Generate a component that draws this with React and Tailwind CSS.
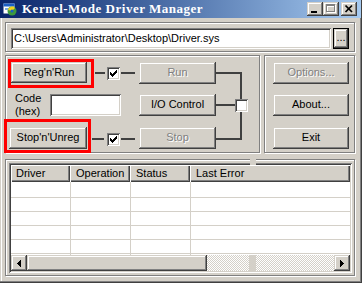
import React from 'react';

// classic win2k bevels
const raised =
  'bg-[#d4d0c8] shadow-[inset_-1px_-1px_0_#404040,inset_1px_1px_0_#d4d0c8,inset_-2px_-2px_0_#808080,inset_2px_2px_0_#fff]';
const sunken =
  'bg-white shadow-[inset_1px_1px_0_#808080,inset_-1px_-1px_0_#fff,inset_2px_2px_0_#404040,inset_-2px_-2px_0_#d4d0c8]';
const etched = 'border border-[#808080] shadow-[inset_1px_1px_0_#fff,1px_1px_0_#fff]';
const headerCell =
  'bg-[#d4d0c8] shadow-[inset_1px_1px_0_#fff,inset_-1px_-1px_0_#404040,inset_-2px_-2px_0_#808080]';
const dither = 'bg-[repeating-conic-gradient(#fff_0_25%,#d4d0c8_0_50%)] bg-size-[2px_2px]';

const Button = ({ className = '', disabled, children }) => (
  <div
    className={`${raised} flex shrink-0 items-center justify-center pb-[1px] ${
      disabled ? 'text-[#808080] [text-shadow:1px_1px_0_#fff]' : 'text-black'
    } ${className}`}
  >
    {children}
  </div>
);

const Check = ({ checked, className = '' }) => (
  <div className={`${sunken} flex h-[13px] w-[13px] shrink-0 items-center justify-center ${className}`}>
    {checked && (
      <svg width="7" height="7" viewBox="0 0 7 7" shapeRendering="crispEdges">
        <g fill="#000">
          <rect x="6" y="0" width="1" height="1" />
          <rect x="5" y="1" width="2" height="1" />
          <rect x="0" y="2" width="1" height="1" />
          <rect x="4" y="2" width="3" height="1" />
          <rect x="0" y="3" width="2" height="1" />
          <rect x="3" y="3" width="3" height="1" />
          <rect x="0" y="4" width="5" height="1" />
          <rect x="1" y="5" width="3" height="1" />
          <rect x="2" y="6" width="1" height="1" />
        </g>
      </svg>
    )}
  </div>
);

const Line = ({ className = '' }) => <div className={`h-[2px] shrink-0 bg-[#404040] ${className}`} />;

const rowHeights = ['h-[16px]', 'h-[14px]', 'h-[14px]', 'h-[14px]', 'h-[14px]', 'h-[1px]'];

export default function App() {
  return (
    <div className="relative flex h-[283px] w-[362px] flex-col overflow-hidden border-r border-b border-[#404040] bg-[#d4d0c8] font-['Liberation_Sans',Arial,sans-serif] text-[11px] leading-[13px] text-black shadow-[inset_-1px_-1px_0_#808080,inset_1px_0_0_#d4d0c8,inset_2px_0_0_#fff]">
      {/* Title bar */}
      <div className="flex h-[18px] shrink-0 items-center bg-linear-to-r from-[#0a246a] to-[#a6caf0]">
        <svg className="ml-[2px] shrink-0" width="16" height="16" viewBox="0 0 16 16">
          <rect x="1" y="2" width="12" height="11" fill="#fff" stroke="#0a246a" />
          <rect x="1.5" y="2.5" width="11" height="3" fill="#1c5fc4" />
          <circle cx="10" cy="10" r="4.5" fill="#3c9a3c" />
          <path d="M6 9 A4 4 0 0 1 13 7 L10 10 Z" fill="#f2d21b" />
          <circle cx="10" cy="10" r="1.5" fill="#1c5fc4" />
          <rect x="3" y="7" width="3" height="2" fill="#7aa7e0" />
        </svg>
        <span className="ml-[4px] mt-[-2px] font-['Liberation_Serif',serif] text-[13px] font-bold tracking-[0.5px] text-white">
          Kernel-Mode Driver Manager
        </span>
        <div className="flex-1" />
        <div className={`${raised} h-[14px] w-[16px]`}>
          <svg width="16" height="14" shapeRendering="crispEdges">
            <rect x="4" y="9" width="6" height="2" fill="#000" />
          </svg>
        </div>
        <div className={`${raised} h-[14px] w-[16px]`}>
          <svg width="16" height="14" shapeRendering="crispEdges">
            <g fill="none" stroke="#fff">
              <rect x="4.5" y="3.5" width="8" height="7" />
              <line x1="4" y1="4.5" x2="13" y2="4.5" />
            </g>
            <g fill="none" stroke="#808080">
              <rect x="3.5" y="2.5" width="8" height="7" />
              <line x1="3" y1="3.5" x2="12" y2="3.5" />
            </g>
          </svg>
        </div>
        <div className={`${raised} ml-[2px] mr-[4px] h-[14px] w-[16px]`}>
          <svg width="16" height="14">
            <g stroke="#000" strokeWidth="1.7">
              <line x1="4.5" y1="3.5" x2="11" y2="10" />
              <line x1="11" y1="3.5" x2="4.5" y2="10" />
            </g>
          </svg>
        </div>
      </div>

      <div className="flex flex-col pl-[5px] pt-[4px]">
        {/* Path */}
        <div className={`${etched} flex h-[30px] w-[350px] items-start`}>
          <div className={`${sunken} ml-[5px] mt-[5px] flex h-[21px] w-[320px] items-center pl-[3px]`}>
            C:\Users\Administrator\Desktop\Driver.sys
          </div>
          <div className="ml-[2px] mt-[5px] h-[21px] w-[16px] border border-black">
            <div className={`${raised} flex h-full w-full items-center justify-center pb-[2px]`}>...</div>
          </div>
        </div>

        <div className="mt-[3px] flex">
          {/* Controls */}
          <div className={`${etched} flex h-[98px] w-[255px]`}>
            <div className="flex w-[210px] shrink-0 flex-col">
              <div className="mt-[3px] flex h-[29px] items-start">
                <div className="ml-[2px] h-[29px] w-[86px] shrink-0 border-[3px] border-[#ff0000]">
                  <Button className="h-[21px] w-[76px]">Reg'n'Run</Button>
                </div>
                <Line className="ml-[1px] mt-[13px] w-[10px]" />
                <Check checked className="ml-[2px] mt-[8px]" />
                <Line className="ml-[1px] mt-[13px] w-[14px]" />
                <Button disabled className="ml-[4px] mt-[3px] h-[22px] w-[77px]">Run</Button>
              </div>
              <div className="mt-[5px] flex h-[23px] items-start">
                <div className="ml-[9px] mt-[-1px] w-[35px] shrink-0">
                  Code
                  <br />
                  (hex)
                </div>
                <div className={`${sunken} mt-[1px] h-[22px] w-[71px] shrink-0`} />
                <Button className="ml-[18px] mt-[1px] h-[22px] w-[77px]">I/O Control</Button>
              </div>
              <div className="mt-[3px] flex h-[34px] items-start">
                <div className="ml-[-2px] h-[34px] w-[87px] shrink-0 border-[3px] border-[#ff0000]">
                  <Button className="ml-[2px] mt-[5px] h-[22px] w-[78px]">Stop'n'Unreg</Button>
                </div>
                <Line className="ml-[1px] mt-[19px] w-[12px]" />
                <Check checked className="ml-[3px] mt-[14px]" />
                <Line className="ml-[1px] mt-[19px] w-[14px]" />
                <Button disabled className="ml-[4px] mt-[8px] h-[22px] w-[77px]">Stop</Button>
              </div>
            </div>
            {/* bracket */}
            <div className="mt-[16px] flex flex-col">
              <svg width="26" height="27" shapeRendering="crispEdges">
                <rect x="0" y="0" width="26" height="2" fill="#404040" />
                <rect x="24" y="0" width="2" height="27" fill="#404040" />
              </svg>
              <div className="flex h-[13px] items-start">
                <Line className="mt-[5px] w-[19px]" />
                <Check />
              </div>
              <svg width="26" height="28" shapeRendering="crispEdges">
                <rect x="24" y="0" width="2" height="28" fill="#404040" />
                <rect x="0" y="26" width="26" height="2" fill="#404040" />
              </svg>
            </div>
          </div>

          {/* Side buttons */}
          <div className={`${etched} ml-[4px] flex h-[98px] w-[91px] flex-col`}>
            <Button disabled className="ml-[8px] mt-[6px] h-[22px] w-[76px]">Options...</Button>
            <Button className="ml-[8px] mt-[10px] h-[22px] w-[76px]">About...</Button>
            <Button className="ml-[8px] mt-[11px] h-[22px] w-[76px]">Exit</Button>
          </div>
        </div>

        {/* List */}
        <div className={`${etched} mt-[6px] h-[117px] w-[350px]`}>
          <div className={`${sunken} ml-[3px] mt-[3px] flex h-[110px] w-[343px] flex-col p-[2px]`}>
            <div className="flex h-[17px] shrink-0">
              <div className={`${headerCell} flex w-[59px] items-center pl-[5px]`}>Driver</div>
              <div className={`${headerCell} flex w-[60px] items-center pl-[6px]`}>Operation</div>
              <div className={`${headerCell} flex w-[60px] items-center pl-[6px]`}>Status</div>
              <div className={`${headerCell} flex w-[160px] items-center pl-[6px]`}>Last Error</div>
            </div>
            <div className="flex h-[73px] shrink-0 flex-col bg-white">
              {rowHeights.map((h, i) => (
                <div key={i} className={`flex shrink-0 ${h} ${i < 5 ? 'border-b border-[#d4d0c8]' : ''}`}>
                  <div className="w-[60px] border-r border-[#d4d0c8]" />
                  <div className="w-[60px] border-r border-[#d4d0c8]" />
                  <div className="w-[60px] border-r border-[#d4d0c8]" />
                  <div className="flex-1" />
                </div>
              ))}
            </div>
            <div className="flex h-[16px] shrink-0">
              <div className={`${raised} flex w-[16px] items-center justify-center`}>
                <svg width="4" height="7" shapeRendering="crispEdges">
                  <path d="M4 0 L0 3.5 L4 7 Z" fill="#000" />
                </svg>
              </div>
              <div className={`${raised} w-[180px]`} />
              <div className={`${dither} w-[42px]`} />
              <div className="w-[7px] bg-[#d4d0c8]" />
              <div className={`${dither} w-[78px]`} />
              <div className={`${raised} flex w-[16px] items-center justify-center`}>
                <svg width="4" height="7" shapeRendering="crispEdges">
                  <path d="M0 0 L4 3.5 L0 7 Z" fill="#000" />
                </svg>
              </div>
            </div>
          </div>
        </div>
      </div>

      {/* header notch artifact */}
      <div className="absolute left-[250px] top-[159px] h-[6px] w-[6px] bg-[#d4d0c8]" />
    </div>
  );
}
